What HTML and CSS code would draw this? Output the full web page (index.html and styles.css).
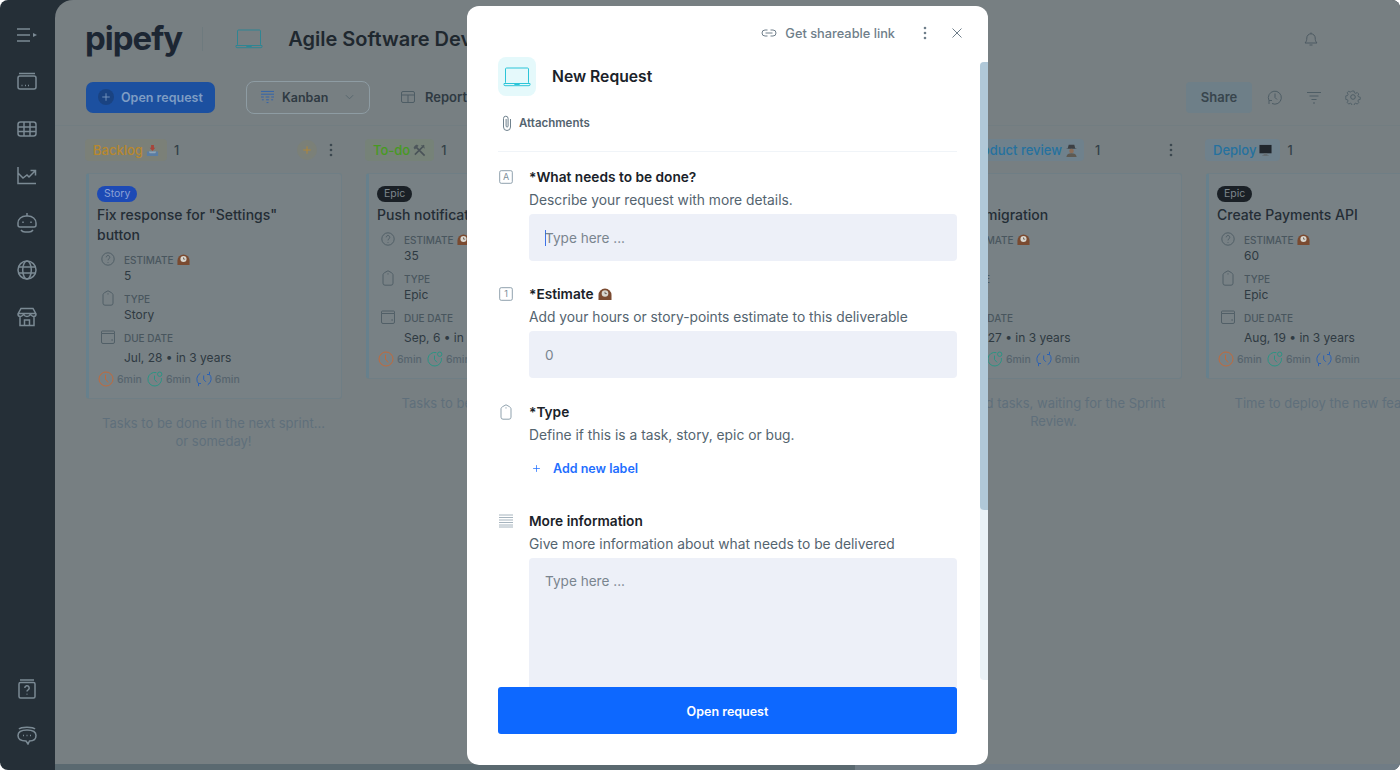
FILE: index.html
```html
<!DOCTYPE html>
<html lang="en">

<head>
  <meta charset="UTF-8">
  <meta name="viewport" content="width=device-width, initial-scale=1.0">
  <title>Agile Software Development - Pipefy</title>
  <link rel="stylesheet" href="styles.css">
</head>

<body>

  <svg class="sprite">
    <symbol id="i-laptop" viewBox="0 0 28 20"><rect x="2.5" y="1" width="23" height="15.5" rx="1" fill="none" stroke="currentColor"/><path d="M1 16.5h26v1.2a1 1 0 0 1-1 1H2a1 1 0 0 1-1-1zM11 16.5l.6 1h4.8l.6-1" fill="none" stroke="currentColor"/></symbol>
    <symbol id="i-help" viewBox="0 0 16 16"><circle cx="8" cy="8" r="6.2" fill="none" stroke="currentColor"/><path d="M6.2 6.3a1.8 1.8 0 1 1 2.8 1.5c-.7.4-1 .8-1 1.6M8 11v.8" fill="none" stroke="currentColor"/></symbol>
    <symbol id="i-tag" viewBox="0 0 16 16"><path d="M3 5c0-1 .6-1.700 1.500-2.300L8 .8l3.500 1.900c.9.6 1.500 1.300 1.500 2.300v8.200a2 2 0 0 1-2 2H5a2 2 0 0 1-2-2z" fill="none" stroke="currentColor"/><path d="M8 3.300v1.200" stroke="currentColor"/></symbol>
    <symbol id="i-date" viewBox="0 0 16 16"><path d="M1.500 4.500h13V13a1.500 1.500 0 0 1-1.500 1.500H3A1.500 1.500 0 0 1 1.500 13zM1.500 4.500V3A1 1 0 0 1 2.500 2h11a1 1 0 0 1 1 1v1.500" fill="none" stroke="currentColor"/><path d="M11.500 11h1.200" stroke="currentColor" stroke-width="1.400"/></symbol>
    <symbol id="i-clock" viewBox="0 0 16 16"><circle cx="8" cy="8" r="7" fill="none" stroke="currentColor"/><path d="M7.500 3.800v4.400l2.700 3.200" fill="none" stroke="currentColor"/></symbol>
    <symbol id="i-clockdot" viewBox="0 0 16 16"><path d="M9.300 1.600A6.800 6.800 0 1 0 14.400 7" fill="none" stroke="currentColor"/><circle cx="12.700" cy="3.200" r="2.200" fill="none" stroke="currentColor"/><path d="M7.500 4.500v4l2.500 2.800" fill="none" stroke="currentColor"/></symbol>
    <symbol id="i-cycle" viewBox="0 0 16 16"><path d="M4.300 2.300A6.800 6.800 0 0 0 2.800 13M11.700 13.700A6.800 6.800 0 0 0 13.200 3" fill="none" stroke="currentColor"/><path d="M13.500 .8V3.500H11M2.500 15.200V12.500H5M7.700 4.500v4l2.200 2.300" fill="none" stroke="currentColor"/></symbol>
    <symbol id="i-dots" viewBox="0 0 4 14"><circle cx="2" cy="2" r="1.300" fill="currentColor"/><circle cx="2" cy="7" r="1.300" fill="currentColor"/><circle cx="2" cy="12" r="1.300" fill="currentColor"/></symbol>
    <symbol id="i-mantel" viewBox="0 0 14 14"><path d="M.5 13V8a6.500 6.500 0 0 1 13 0v5z" fill="#7a4a30"/><circle cx="7" cy="6.500" r="3.300" fill="#d8d6cf"/><path d="M7 4.800v1.800h1.800" fill="none" stroke="#5a4a40" stroke-width=".8"/></symbol>
    <symbol id="i-inbox" viewBox="0 0 14 14"><path d="M1 8h12v5H1z" fill="#5a7da3"/><path d="M3 8h8l-1 2H4z" fill="#8fa5b8"/><path d="M5.500 1h3v3H10L7 7.500 4 4h1.500z" fill="#a8443a"/></symbol>
    <symbol id="i-tools" viewBox="0 0 14 14"><path d="M2 2l10.500 10.500M12 1.500 2 11.500" fill="none" stroke="#4a5358" stroke-width="1.700"/><path d="M.5 4 4 .5l2 1.500L2 6zM8.500 1c2 0 4 1.500 4.500 4L10 3z" fill="#4e575c"/></symbol>
    <symbol id="i-spy" viewBox="0 0 14 14"><path d="M3 4.500 4 .8h6l1 3.700 2 .7H1z" fill="#3d4044"/><circle cx="7" cy="7.500" r="2.500" fill="#8a6d58"/><path d="M1.500 14c.3-3 2.500-4 5.500-4s5.200 1 5.500 4z" fill="#5e5a52"/></symbol>
    <symbol id="i-monitor" viewBox="0 0 14 14"><rect x=".5" y="1" width="13" height="9" fill="#20262c"/><path d="M5 10h4v2H5zM3.500 12h7v1h-7z" fill="#646d72"/></symbol>
    <symbol id="i-plus" viewBox="0 0 12 12"><path d="M6 1.500v9M1.500 6h9" fill="none" stroke="currentColor"/></symbol>
    <symbol id="i-text" viewBox="0 0 14 14"><rect x=".7" y=".7" width="12.600" height="12.600" rx="1.500" fill="none" stroke="currentColor"/></symbol>
  </svg>

  <div class="app">

    <nav class="sidebar">
      <svg class="nav-icon" viewBox="0 0 20 20"><path d="M0 4h13M0 10h13M0 16h13"/><path d="M16 8l4 2-4 2z" fill="currentColor" stroke="none"/></svg>
      <svg class="nav-icon" viewBox="0 0 20 20"><rect x="1" y="4" width="18" height="13" rx="2"/><path d="M2 1.500h16M4.500 13.500h1M8 13.500h1M11 13.500h1"/></svg>
      <svg class="nav-icon" viewBox="0 0 20 20"><rect x="1" y="3" width="18" height="14" rx="2.500"/><path d="M1 8h18M1 12.500h18M7 3v14M13 3v14"/></svg>
      <svg class="nav-icon" viewBox="0 0 20 20"><path d="M1 1v16.500h18M1 7l5 5 4-3 2 2 6-6M13.500 4.500h5v5"/></svg>
      <svg class="nav-icon" viewBox="0 0 20 20"><path d="M10 3V0M1 12v-2a8 7 0 0 1 8-7h2a8 7 0 0 1 8 7v2a2 2 0 0 1-2 2H3a2 2 0 0 1-2-2zM4 17c1 1.500 2 2 4 2h4c2 0 3-.5 4-2M6 8.500v1.500M14 8.500v1.500"/></svg>
      <svg class="nav-icon" viewBox="0 0 20 20"><circle cx="10" cy="10" r="9"/><ellipse cx="10" cy="10" rx="4.300" ry="9"/><path d="M1.500 7h17M1.500 13h17"/></svg>
      <svg class="nav-icon" viewBox="0 0 20 20"><path d="M4 1.500h12l3 5.500c0 1.500-1 2.500-2.300 2.500S14.500 8.500 13.300 7.500C12.500 9 11.500 9.500 10 9.500S7.500 9 6.700 7.500C5.500 8.500 4.600 9.500 3.300 9.500S1 8.500 1 7zM3 9.500v9h14v-9M7.500 18.500V13h5v5.500M1 6.500h18"/></svg>
      <div class="nav-bottom">
        <svg class="nav-icon" viewBox="0 0 20 20"><path d="M3 1h14M2 5a1.500 1.500 0 0 1 1.500-1.500h13A1.500 1.500 0 0 1 18 5v12.500a1.500 1.500 0 0 1-1.500 1.500h-13A1.500 1.500 0 0 1 2 17.500zM7.800 9a2.200 2.200 0 1 1 3.300 1.900c-.8.400-1.100.8-1.100 1.600M10 14.800v.8"/></svg>
        <svg class="nav-icon" viewBox="0 0 20 20"><path d="M2 4c2-2.500 14-2.500 16 0M10 5c5 0 9 1.500 9 5.500S16 16 12.500 16L11 19l-2-3c-4 0-8-1.500-8-5.500S5 5 10 5zM6 10.500h1M9.500 10.500h1M13 10.500h1"/></svg>
      </div>
    </nav>

    <main class="main">
      <header class="topbar">
        <span class="logo">pipefy</span>
        <span class="logo-divider"></span>
        <svg class="pipe-icon"><use href="#i-laptop"/></svg>
        <h1 class="pipe-name">Agile Software Development</h1>
        <svg class="bell" viewBox="0 0 16 16"><path d="M2 12c1.500-1.500 1.800-3 1.800-5a4.200 4.200 0 0 1 8.400 0c0 2 .3 3.500 1.800 5zM6.500 14h3M8 1.500v1.300" fill="none" stroke="currentColor"/></svg>
      </header>

      <div class="toolbar">
        <button class="open-btn"><span class="open-plus"><svg><use href="#i-plus"/></svg></span>Open request</button>
        <button class="view-select">
          <svg class="kanban-icon" viewBox="0 0 14 14"><path d="M0 1h14M0 4h14M0 7h3M5 7h4M11 7h3M1 10h2M5.500 10h3M11 10h2M6 13h2" fill="none" stroke="currentColor"/></svg>
          Kanban
          <svg class="chevron" viewBox="0 0 10 6"><path d="M1 1l4 4 4-4" fill="none" stroke="currentColor"/></svg>
        </button>
        <div class="reports">
          <svg viewBox="0 0 14 12"><rect x=".5" y=".5" width="13" height="11" rx="1.500" fill="none" stroke="currentColor"/><path d="M.5 4h13M7 4v7.500" stroke="currentColor"/></svg>
          Reports
        </div>
        <div class="toolbar-right">
          <button class="share-btn">Share</button>
          <svg class="tool-icon" viewBox="0 0 16 16"><path d="M2 11.500A6.500 6.500 0 1 1 5 14.500M2 15v-3.500h3M8 4.500v4l2 2" fill="none" stroke="currentColor"/></svg>
          <svg class="tool-icon" viewBox="0 0 16 16"><path d="M1 3.500h14M3.500 7h9M5.500 10.500h5M7 14h2" fill="none" stroke="currentColor"/></svg>
          <svg class="tool-icon" viewBox="0 0 16 16"><path d="M6.700 1h2.600l.4 2 1.500.7 1.800-1 1.800 1.800-1 1.800.7 1.500 2 .4v2.600l-2 .4-.7 1.500 1 1.800-1.800 1.800-1.800-1-1.500.7-.4 2H6.700l-.4-2-1.500-.7-1.800 1-1.800-1.800 1-1.800-.7-1.500-2-.4V6.700l2-.4.700-1.500-1-1.800L2.900 1.200l1.800 1 1.500-.7z" transform="translate(1.200 1.200) scale(.85)" fill="none" stroke="currentColor"/><circle cx="8" cy="8" r="2.300" fill="none" stroke="currentColor"/></svg>
        </div>
      </div>

      <div class="board">

        <section class="column">
          <div class="col-head">
            <span class="pill pill-backlog">Backlog <svg class="emoji"><use href="#i-inbox"/></svg></span>
            <span class="count">1</span>
            <span class="col-add"><svg><use href="#i-plus"/></svg></span>
            <svg class="col-dots"><use href="#i-dots"/></svg>
          </div>
          <article class="card">
            <span class="badge badge-story">Story</span>
            <h3 class="card-title">Fix response for "Settings" button</h3>
            <div class="card-field"><svg class="field-icon"><use href="#i-help"/></svg><div><div class="card-label">Estimate <svg class="emoji"><use href="#i-mantel"/></svg></div><div class="card-value">5</div></div></div>
            <div class="card-field"><svg class="field-icon"><use href="#i-tag"/></svg><div><div class="card-label">Type</div><div class="card-value">Story</div></div></div>
            <div class="card-field"><svg class="field-icon"><use href="#i-date"/></svg><div><div class="card-label">Due date</div><div class="card-value date">Jul, 28 • in 3 years</div></div></div>
            <div class="timers">
              <svg class="t-late"><use href="#i-clock"/></svg><span>6min</span>
              <svg class="t-done"><use href="#i-clockdot"/></svg><span>6min</span>
              <svg class="t-cycle"><use href="#i-cycle"/></svg><span>6min</span>
            </div>
          </article>
          <p class="col-note">Tasks to be done in the next sprint... or someday!</p>
        </section>

        <section class="column">
          <div class="col-head">
            <span class="pill pill-todo">To-do <svg class="emoji"><use href="#i-tools"/></svg></span>
            <span class="count">1</span>
          </div>
          <article class="card">
            <span class="badge badge-epic">Epic</span>
            <h3 class="card-title">Push notifications</h3>
            <div class="card-field"><svg class="field-icon"><use href="#i-help"/></svg><div><div class="card-label">Estimate <svg class="emoji"><use href="#i-mantel"/></svg></div><div class="card-value">35</div></div></div>
            <div class="card-field"><svg class="field-icon"><use href="#i-tag"/></svg><div><div class="card-label">Type</div><div class="card-value">Epic</div></div></div>
            <div class="card-field"><svg class="field-icon"><use href="#i-date"/></svg><div><div class="card-label">Due date</div><div class="card-value date">Sep, 6 • in 3 years</div></div></div>
            <div class="timers">
              <svg class="t-late"><use href="#i-clock"/></svg><span>6min</span>
              <svg class="t-done"><use href="#i-clockdot"/></svg><span>6min</span>
              <svg class="t-cycle"><use href="#i-cycle"/></svg><span>6min</span>
            </div>
          </article>
          <p class="col-note">Tasks to be done in this sprint</p>
        </section>

        <section class="column"></section>

        <section class="column">
          <div class="col-head">
            <span class="pill pill-blue pill-review">Product review <svg class="emoji"><use href="#i-spy"/></svg></span>
            <span class="count">1</span>
            <svg class="col-dots"><use href="#i-dots"/></svg>
          </div>
          <article class="card">
            <span class="badge badge-epic">Epic</span>
            <h3 class="card-title">Server migration</h3>
            <div class="card-field"><svg class="field-icon"><use href="#i-help"/></svg><div><div class="card-label">Estimate <svg class="emoji"><use href="#i-mantel"/></svg></div><div class="card-value">40</div></div></div>
            <div class="card-field"><svg class="field-icon"><use href="#i-tag"/></svg><div><div class="card-label">Type</div><div class="card-value">Epic</div></div></div>
            <div class="card-field"><svg class="field-icon"><use href="#i-date"/></svg><div><div class="card-label">Due date</div><div class="card-value date">Jul, 27 • in 3 years</div></div></div>
            <div class="timers">
              <svg class="t-late"><use href="#i-clock"/></svg><span>6min</span>
              <svg class="t-done"><use href="#i-clockdot"/></svg><span>6min</span>
              <svg class="t-cycle"><use href="#i-cycle"/></svg><span>6min</span>
            </div>
          </article>
          <p class="col-note">Finished tasks, waiting for the Sprint Review.</p>
        </section>

        <section class="column">
          <div class="col-head">
            <span class="pill pill-blue">Deploy <svg class="emoji"><use href="#i-monitor"/></svg></span>
            <span class="count">1</span>
          </div>
          <article class="card">
            <span class="badge badge-epic">Epic</span>
            <h3 class="card-title">Create Payments API</h3>
            <div class="card-field"><svg class="field-icon"><use href="#i-help"/></svg><div><div class="card-label">Estimate <svg class="emoji"><use href="#i-mantel"/></svg></div><div class="card-value">60</div></div></div>
            <div class="card-field"><svg class="field-icon"><use href="#i-tag"/></svg><div><div class="card-label">Type</div><div class="card-value">Epic</div></div></div>
            <div class="card-field"><svg class="field-icon"><use href="#i-date"/></svg><div><div class="card-label">Due date</div><div class="card-value date">Aug, 19 • in 3 years</div></div></div>
            <div class="timers">
              <svg class="t-late"><use href="#i-clock"/></svg><span>6min</span>
              <svg class="t-done"><use href="#i-clockdot"/></svg><span>6min</span>
              <svg class="t-cycle"><use href="#i-cycle"/></svg><span>6min</span>
            </div>
          </article>
          <p class="col-note">Time to deploy the new features</p>
        </section>

      </div>

      <div class="h-scroll"><div class="h-thumb"></div></div>
    </main>

    <!-- New request form -->
    <div class="modal">
      <div class="modal-top">
        <svg class="link-icon" viewBox="0 0 16 8"><path d="M6.500 1H4a3 3 0 0 0 0 6h2.500M9.500 1H12a3 3 0 0 1 0 6H9.500M4.500 4h7" fill="none" stroke="currentColor"/></svg>
        <span class="share-link">Get shareable link</span>
        <svg class="modal-dots"><use href="#i-dots"/></svg>
        <svg class="modal-close" viewBox="0 0 12 12"><path d="M1.500 1.500l9 9M10.500 1.500l-9 9" fill="none" stroke="currentColor"/></svg>
      </div>

      <div class="modal-body">
        <div class="modal-title">
          <span class="title-icon"><svg><use href="#i-laptop"/></svg></span>
          <h2>New Request</h2>
        </div>

        <div class="attachments">
          <svg viewBox="0 0 10 16"><path d="M8.500 4v8a3.500 3.500 0 0 1-7 0V3.500a2.300 2.300 0 0 1 4.600 0V11a1 1 0 0 1-2 0V4" fill="none" stroke="currentColor"/></svg>
          Attachments
        </div>

        <div class="rule"></div>

        <div class="field">
          <span class="field-type"><svg><use href="#i-text"/></svg><b>A</b></span>
          <div class="field-main">
            <label>*What needs to be done?</label>
            <p>Describe your request with more details.</p>
            <div class="input"><span class="caret"></span>Type here ...</div>
          </div>
        </div>

        <div class="field">
          <span class="field-type"><svg><use href="#i-text"/></svg><b>1</b></span>
          <div class="field-main">
            <label>*Estimate <svg class="emoji-lg"><use href="#i-mantel"/></svg></label>
            <p>Add your hours or story-points estimate to this deliverable</p>
            <div class="input">0</div>
          </div>
        </div>

        <div class="field field-type-row">
          <span class="field-type"><svg><use href="#i-tag"/></svg></span>
          <div class="field-main">
            <label>*Type</label>
            <p>Define if this is a task, story, epic or bug.</p>
            <div class="add-label"><svg><use href="#i-plus"/></svg>Add new label</div>
          </div>
        </div>

        <div class="field">
          <span class="field-type"><svg viewBox="0 0 14 14"><path d="M0 1h14M0 3.500h14M0 6h14M0 8.500h14M0 11h14M0 13h14" fill="none" stroke="currentColor" stroke-width=".8"/></svg></span>
          <div class="field-main">
            <label>More information</label>
            <p>Give more information about what needs to be delivered</p>
            <div class="input textarea">Type here ...</div>
          </div>
        </div>
      </div>

      <div class="modal-foot">
        <button class="submit">Open request</button>
      </div>

      <div class="modal-scroll"><div class="modal-thumb"></div></div>
    </div>

  </div>

</body>

</html>
```

FILE: styles.css
```css
* {
  box-sizing: border-box;
}

body {
  margin: 0;
  background: #fff;
  font-family: Inter, "Noto Sans", sans-serif;
  overflow: hidden;
}

button {
  font-family: inherit;
  border: none;
}

svg {
  display: block;
}

.sprite {
  display: none;
}

.app {
  position: relative;
  display: flex;
  width: 1400px;
  height: 770px;
  background: #252f37;
  border-radius: 8px;
  overflow: hidden;
}

/* left nav */
.sidebar {
  display: flex;
  flex-direction: column;
  align-items: center;
  flex: 0 0 55px;
  padding-top: 25px;
  padding-right: 1px;
  gap: 27px;
}

.nav-icon {
  width: 20px;
  height: 20px;
  color: #7b8a94;
  fill: none;
  stroke: currentColor;
  stroke-width: 1.5;
}

.nav-bottom {
  display: flex;
  flex-direction: column;
  gap: 26px;
  margin-top: auto;
  padding-bottom: 25px;
}

/* dimmed page behind the form */
.main {
  position: relative;
  flex: 1;
  min-width: 0;
  background: #777f82;
  border-top-left-radius: 18px;
  overflow: hidden;
}

.topbar {
  display: flex;
  align-items: center;
  height: 78px;
  padding-left: 30px;
}

.logo {
  font-size: 33px;
  font-weight: 700;
  letter-spacing: -1px;
  color: #1c2633;
  line-height: 1;
  margin-top: -1px;
}

.logo-divider {
  width: 1px;
  height: 24px;
  margin-left: 20px;
  background: #6e7a7e;
}

.pipe-icon {
  width: 28px;
  height: 20px;
  margin-left: 32px;
  color: #2f8593;
}

.pipe-name {
  margin: 0 0 0 25px;
  font-size: 20px;
  font-weight: 600;
  color: #1f282f;
  white-space: nowrap;
}

.bell {
  width: 16px;
  height: 16px;
  margin-left: auto;
  margin-right: 81px;
  color: #4d5a62;
}

.toolbar {
  display: flex;
  align-items: center;
  height: 48px;
  padding: 0 39px 9px 31px;
  border-bottom: 1px solid #727d81;
}

.open-btn {
  display: flex;
  align-items: center;
  gap: 7px;
  width: 129px;
  height: 31px;
  padding-left: 12px;
  background: #1c50a0;
  border-radius: 7px;
  color: #7f9dc4;
  font-size: 12.500px;
  font-weight: 600;
}

.open-plus {
  display: flex;
  align-items: center;
  justify-content: center;
  width: 16px;
  height: 16px;
  border-radius: 50%;
  background: #1a4382;
}

.open-plus svg {
  width: 10px;
  height: 10px;
  color: #7f9dc4;
}

.view-select {
  display: flex;
  align-items: center;
  width: 124px;
  height: 33px;
  margin-left: 31px;
  padding: 0 14px;
  background: transparent;
  border: 1px solid #8e9ca3;
  border-radius: 8px;
  color: #2f3a42;
  font-size: 12.500px;
  font-weight: 600;
}

.kanban-icon {
  width: 13px;
  height: 14px;
  margin-right: 8px;
  color: #2f62ad;
}

.chevron {
  width: 9px;
  height: 6px;
  margin-left: auto;
  margin-right: 1px;
  color: #55646c;
}

.reports {
  display: flex;
  align-items: center;
  gap: 10px;
  margin-left: 31px;
  color: #2f3a42;
  font-size: 13px;
  font-weight: 600;
}

.reports svg {
  width: 14px;
  height: 12px;
  color: #4e5d65;
}

.toolbar-right {
  display: flex;
  align-items: center;
  margin-left: auto;
}

.share-btn {
  width: 66px;
  height: 31px;
  margin-right: 15px;
  background: #6e7f88;
  border-radius: 4px;
  color: #38454d;
  font-size: 13px;
  font-weight: 600;
}

.tool-icon {
  width: 16px;
  height: 16px;
  margin-right: 23px;
  color: #4e5d65;
}

.tool-icon:last-child {
  margin-right: 0;
}

/* kanban */
.board {
  display: flex;
  gap: 23px;
  padding: 12px 0 0 30px;
}

.column {
  flex: 0 0 257px;
}

.col-head {
  display: flex;
  align-items: center;
  height: 24px;
  margin-bottom: 11px;
  padding-right: 9px;
}

.pill {
  display: flex;
  align-items: center;
  gap: 3px;
  height: 22px;
  padding: 0 8px;
  border-radius: 4px;
  font-size: 13px;
  font-weight: 500;
  white-space: nowrap;
}

.pill-backlog {
  background: #7b8078;
  color: #b8882e;
}

.pill-todo {
  background: #768278;
  color: #489a22;
}

.pill-blue {
  background: #6f818c;
  color: #25719f;
}

.pill-review {
  justify-content: flex-end;
  width: 159px;
  padding-right: 6px;
}

.pill-review + .count {
  margin-left: 11px;
}

.emoji {
  display: inline-block;
  width: 13px;
  height: 13px;
  vertical-align: -2px;
}

.count {
  margin-left: 7px;
  font-size: 12.500px;
  font-weight: 500;
  color: #333f47;
}

.col-add {
  display: flex;
  align-items: center;
  justify-content: center;
  width: 20px;
  height: 20px;
  margin-left: auto;
  margin-right: 4px;
  border-radius: 50%;
  background: #7b8078;
}

.col-add svg {
  width: 10px;
  height: 10px;
  color: #b8882e;
}

.col-dots {
  width: 4px;
  height: 14px;
  margin-left: auto;
  color: #3c4850;
}

.col-add + .col-dots {
  margin-left: 8px;
}

.card {
  margin-left: 1px;
  padding: 12px 40px 11px 8px;
  background: #788185;
  border: 1px solid #6f7e85;
  border-left: 3px solid #67808c;
  border-radius: 3px;
}

.badge {
  display: block;
  width: fit-content;
  height: 16px;
  padding: 0 7px;
  border-radius: 8px;
  font-size: 10.500px;
  line-height: 16px;
}

.badge-story {
  background: #1d4ab5;
  color: #8ba1d6;
}

.badge-epic {
  background: #1a2026;
  color: #7d868c;
}

.card-title {
  margin: 3px 0 6px;
  font-size: 14px;
  font-weight: 500;
  line-height: 20px;
  color: #242d35;
}

.card-field {
  display: flex;
  padding-left: 3px;
  min-height: 39px;
  white-space: nowrap;
}

.field-icon {
  flex: 0 0 16px;
  width: 16px;
  height: 16px;
  margin: 0 8px 0 0;
  color: #515f67;
}

.card-label {
  display: flex;
  align-items: center;
  gap: 3px;
  height: 15px;
  margin-top: 1px;
  font-size: 10px;
  font-weight: 500;
  text-transform: uppercase;
  color: #49565e;
}

.card-value {
  margin-top: 1px;
  font-size: 12px;
  line-height: 15px;
  color: #2f3a42;
}

.card-value.date {
  margin-top: 5px;
}

.timers {
  display: flex;
  align-items: center;
  height: 16px;
  margin-top: 3px;
  padding-left: 1px;
  font-size: 10.500px;
  font-weight: 500;
  color: #56646d;
}

.timers svg {
  width: 16px;
  height: 16px;
  margin-right: 3px;
  flex: none;
}

.timers span {
  margin-right: 5px;
}

.t-late {
  color: #c06a3c;
}

.t-done {
  color: #2c9484;
}

.t-cycle {
  color: #2c62b4;
}

.col-note {
  margin: 15px 10px 0;
  font-size: 13px;
  line-height: 18px;
  text-align: center;
  color: #5f6f7b;
}

.h-scroll {
  position: absolute;
  left: 0;
  right: 0;
  bottom: 0;
  height: 6px;
  background: #707c85;
}

.h-thumb {
  width: 800px;
  height: 6px;
  background: #5a6970;
}

/* form on top of the page */
.modal {
  position: absolute;
  left: 467px;
  top: 6px;
  display: flex;
  flex-direction: column;
  width: 521px;
  height: 759px;
  padding: 0 31px;
  background: #fff;
  border-radius: 12px;
  overflow: hidden;
}

.modal-top {
  display: flex;
  align-items: center;
  flex: 0 0 auto;
  height: 20px;
  margin-top: 17px;
  color: #6f7e8a;
}

.link-icon {
  width: 16px;
  height: 8px;
  margin-left: auto;
  margin-right: 8px;
}

.share-link {
  font-size: 12.800px;
  font-weight: 500;
}

.modal-dots {
  width: 4px;
  height: 14px;
  margin-left: 28px;
  margin-right: 24px;
}

.modal-close {
  width: 12px;
  height: 12px;
  margin-right: -6px;
}

.modal-body {
  flex: 1;
  min-height: 0;
  overflow: hidden;
}

.modal-title {
  display: flex;
  align-items: center;
  gap: 16px;
  margin-top: 14px;
}

.title-icon {
  display: flex;
  align-items: center;
  justify-content: center;
  width: 38px;
  height: 39px;
  border-radius: 8px;
  background: #e5f9fb;
  color: #2cc5d8;
}

.title-icon svg {
  width: 28px;
  height: 20px;
}

.modal-title h2 {
  margin: 0 0 1px;
  font-size: 15.700px;
  font-weight: 600;
  color: #1a2229;
}

.attachments {
  display: flex;
  align-items: center;
  gap: 7px;
  height: 16px;
  margin: 19px 0 20px 4px;
  font-size: 11.500px;
  font-weight: 600;
  color: #54646f;
}

.attachments svg {
  width: 10px;
  height: 16px;
  color: #6f818d;
}

.rule {
  height: 1px;
  background: #f0f4f8;
}

.field {
  display: flex;
  margin-top: 23px;
}

.rule + .field {
  margin-top: 15px;
}

.field-type-row {
  margin-top: 24px;
}

.field-type-row + .field {
  margin-top: 33px;
}

.field-type {
  position: relative;
  flex: 0 0 31px;
  display: flex;
  justify-content: flex-start;
  padding: 3px 0 0 1px;
  color: #8fa1ad;
}

.field-type svg {
  width: 14px;
  height: 14px;
}

.field-type-row .field-type svg {
  width: 16px;
  height: 16px;
  margin-left: -1px;
  margin-top: -1px;
}

.field-type b {
  position: absolute;
  left: 1px;
  top: 3px;
  width: 14px;
  font-size: 9px;
  font-weight: 400;
  line-height: 14px;
  text-align: center;
  color: #7c8e9a;
}

.field-main {
  flex: 1;
  min-width: 0;
}

.field-main label {
  display: flex;
  align-items: center;
  gap: 4px;
  font-size: 13.700px;
  font-weight: 600;
  line-height: 20px;
  color: #1a2229;
}

.emoji-lg {
  width: 14px;
  height: 14px;
}

.field-main p {
  margin: 4px 0 5px;
  font-size: 13.800px;
  line-height: 18px;
  color: #54646f;
}

.input {
  display: flex;
  align-items: center;
  height: 47px;
  padding-left: 16px;
  background: #edf0f8;
  border-radius: 4px;
  font-size: 13.600px;
  color: #7a858f;
}

.caret {
  width: 1px;
  height: 16px;
  margin-right: -1px;
  background: #3d72e8;
}

.textarea {
  align-items: flex-start;
  height: 180px;
  padding-top: 15px;
}

.add-label {
  display: flex;
  align-items: center;
  gap: 12px;
  height: 20px;
  margin: 14px 0 0 3px;
  font-size: 12.500px;
  font-weight: 600;
  color: #1f6fff;
}

.add-label svg {
  width: 9px;
  height: 9px;
}

.modal-foot {
  flex: 0 0 auto;
  height: 78px;
}

.submit {
  display: block;
  width: 459px;
  height: 47px;
  padding-top: 2px;
  background: #0d68ff;
  border-radius: 3px;
  color: #fff;
  font-size: 12.500px;
  font-weight: 600;
}

.modal-scroll {
  position: absolute;
  right: 0;
  top: 56px;
  width: 8px;
  height: 618px;
  background: #e9f2f7;
  border-radius: 4px 0 0 4px;
}

.modal-thumb {
  height: 448px;
  background: #b0c8d8;
  border-radius: 4px 0 0 4px;
}
```
